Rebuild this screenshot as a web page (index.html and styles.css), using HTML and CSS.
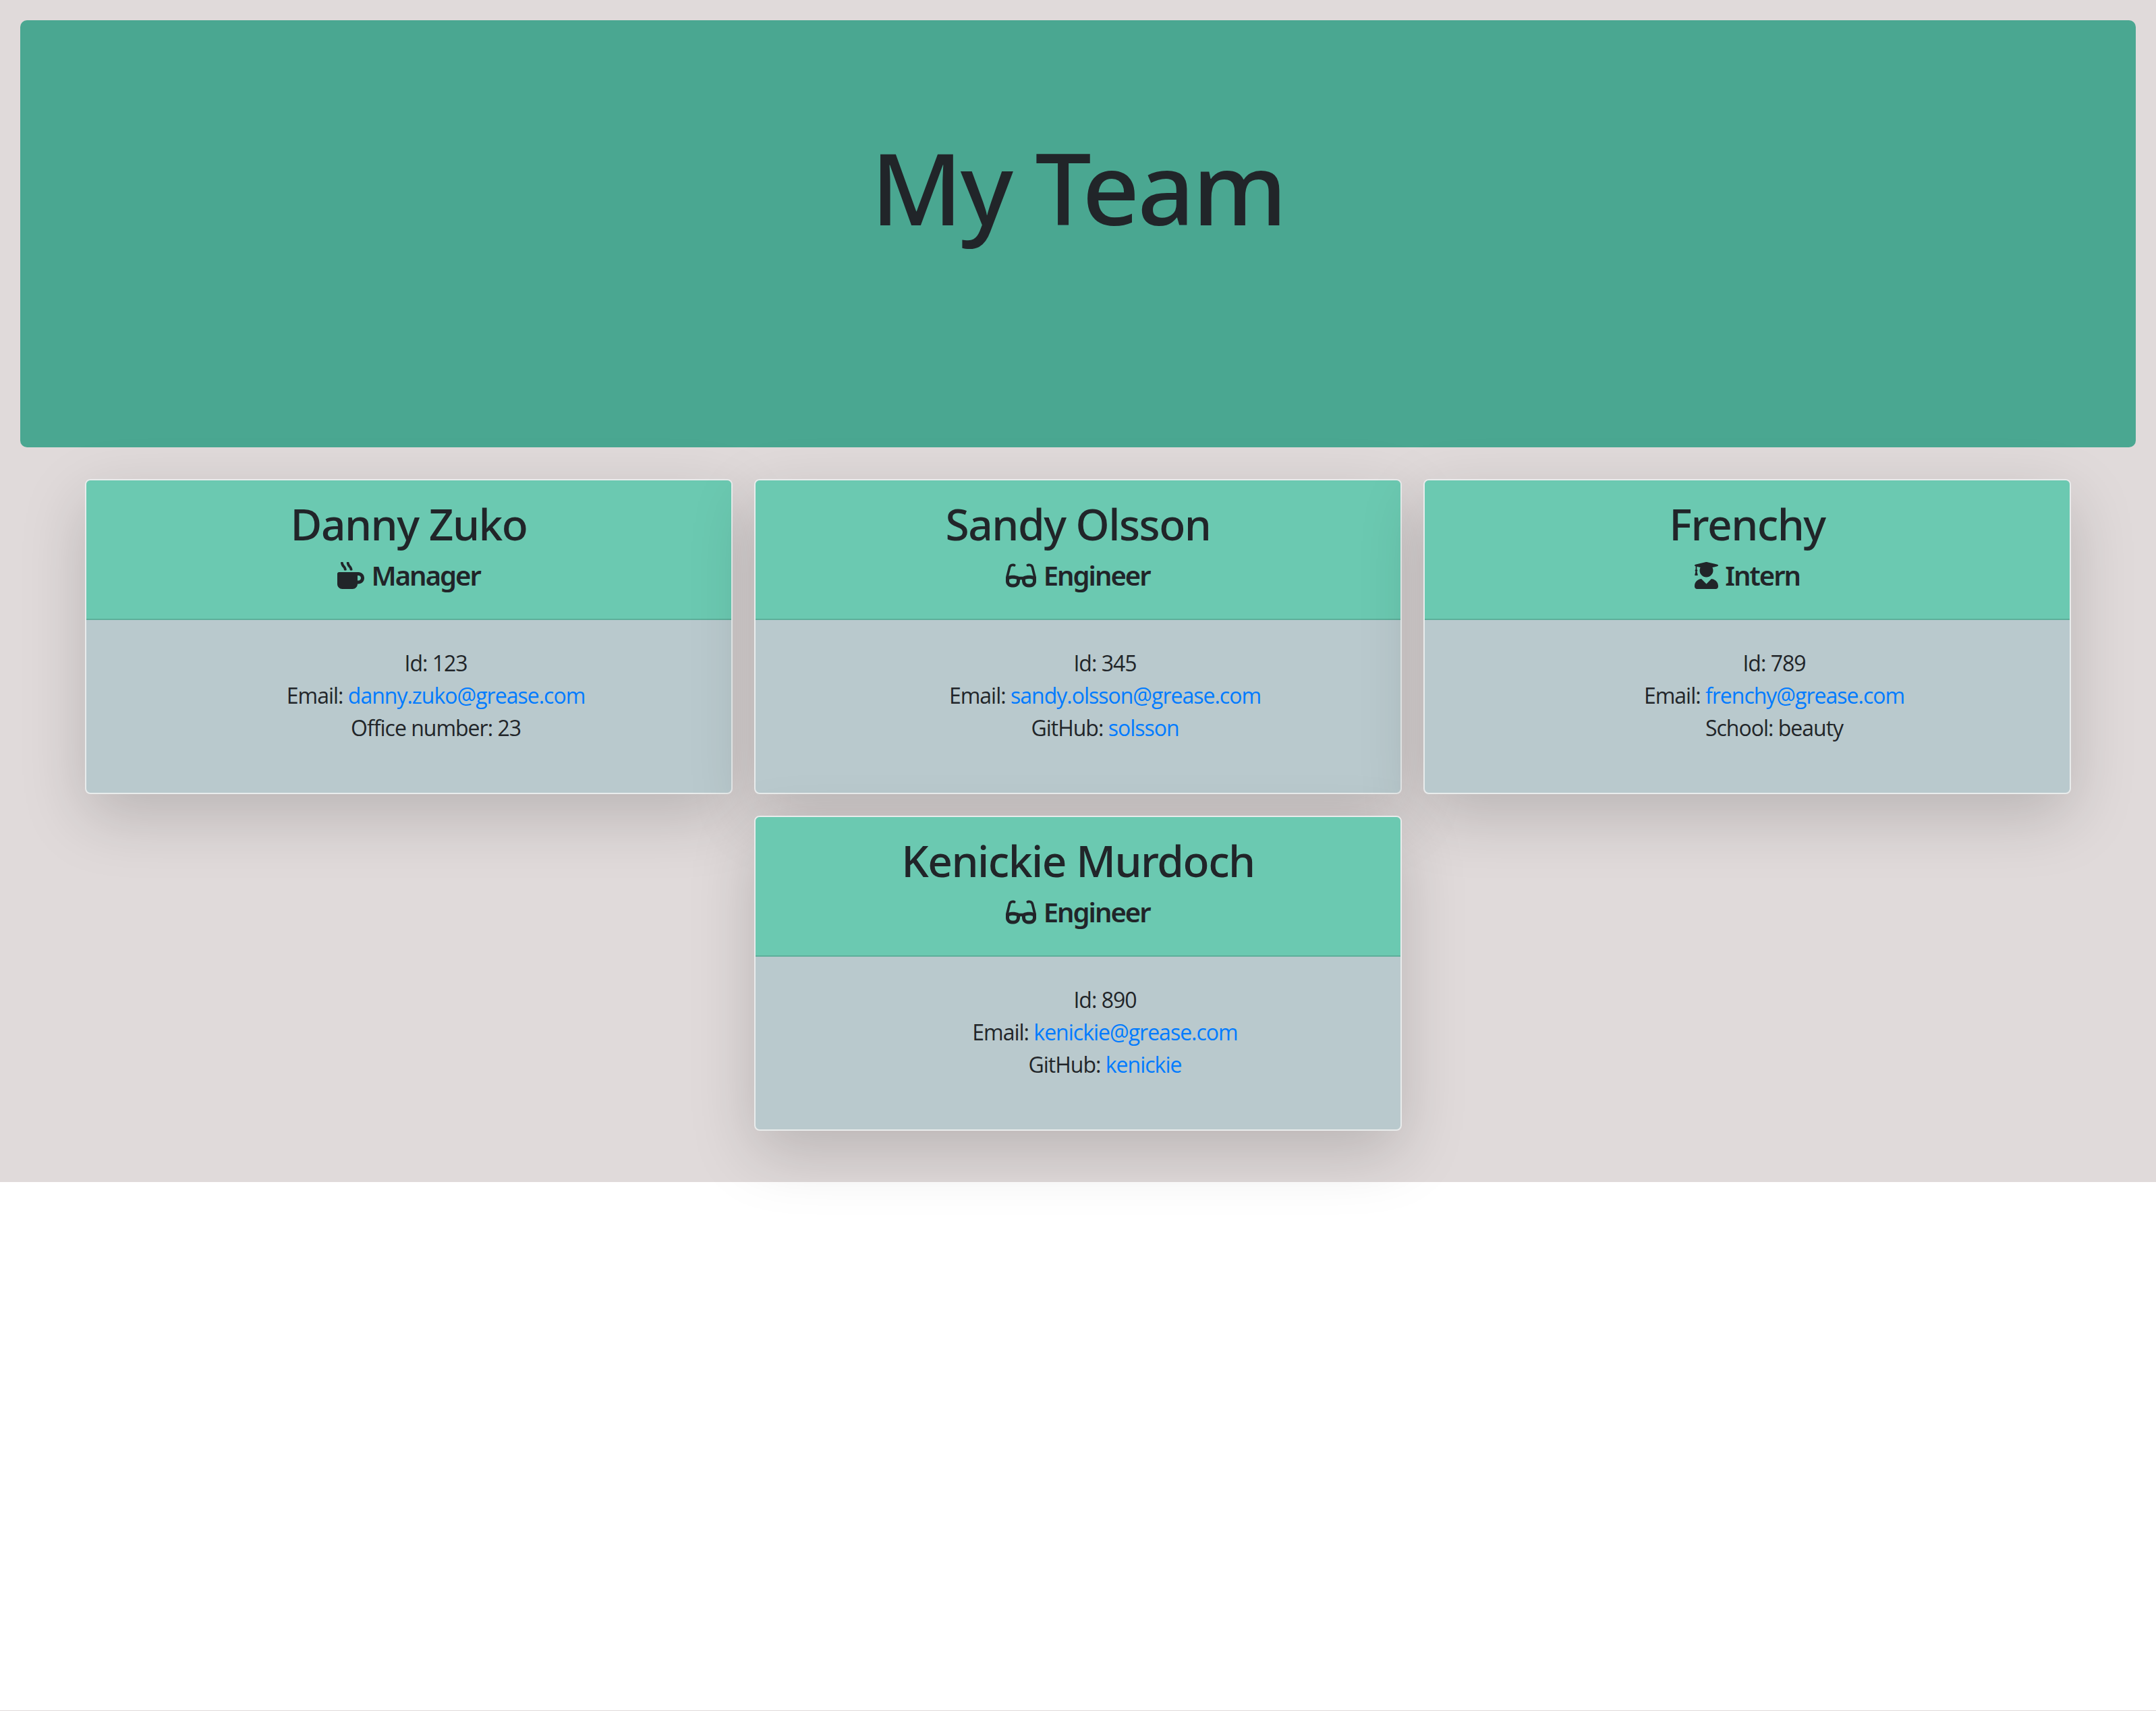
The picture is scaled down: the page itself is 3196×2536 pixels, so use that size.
FILE: index.html
```html
<!DOCTYPE html>
<html lang="en">
<head>
    <meta charset="UTF-8">
    <meta name="viewport" content="width=device-width, initial-scale=1.0">
    <title>My Team</title>
    <link rel="stylesheet" href="styles.css">
</head>
<body>
    <div class="page">
        <header class="jumbotron">
            <h1>My Team</h1>
        </header>

        <main class="team">
            <section class="card">
                <div class="card-header">
                    <h2>Danny Zuko</h2>
                    <h5>
                        <svg class="icon" viewBox="0 0 512 512"><path d="M127.1 146.5c1.3 7.7 8 13.5 16 13.5h16.5c9.8 0 17.6-8.5 16.3-18-3.8-28.2-16.4-54.2-36.6-74.7-14.4-14.7-23.6-33.3-26.4-53.5C111.8 5.9 105 0 96.8 0H80.4C70.6 0 63 8.5 64.1 18c3.9 31.9 18 61.3 40.6 84.4 12 12.2 19.7 27.5 22.4 44.1zm112 0c1.3 7.7 8 13.5 16 13.5h16.5c9.8 0 17.6-8.5 16.3-18-3.8-28.2-16.4-54.2-36.6-74.7-14.4-14.7-23.6-33.3-26.4-53.5C223.8 5.9 217 0 208.8 0h-16.4c-9.8 0-17.5 8.5-16.3 18 3.9 31.9 18 61.3 40.6 84.4 12 12.2 19.7 27.5 22.4 44.1zM400 192H32c-17.7 0-32 14.3-32 32v192c0 53 43 96 96 96h192c53 0 96-43 96-96h16c61.8 0 112-50.2 112-112s-50.2-112-112-112zm0 160h-16v-96h16c26.5 0 48 21.5 48 48s-21.5 48-48 48z"/></svg>
                        Manager
                    </h5>
                </div>
                <div class="card-body">
                    <ul>
                        <li>Id: 123</li>
                        <li>Email: <a href="mailto:danny.zuko@grease.com">danny.zuko@grease.com</a></li>
                        <li>Office number: 23</li>
                    </ul>
                </div>
            </section>

            <section class="card">
                <div class="card-header">
                    <h2>Sandy Olsson</h2>
                    <h5>
                        <svg class="icon" viewBox="0 0 576 512"><path d="M574.1 280.37L528.75 98.66c-5.91-23.7-21.59-44.05-43-55.81-21.44-11.73-46.97-14.11-70.19-6.33l-15.25 5.08c-8.39 2.79-12.92 11.86-10.12 20.24l5.06 15.18c2.79 8.38 11.85 12.91 20.23 10.12l13.18-4.39c10.87-3.62 23-3.57 33.16 1.73 10.29 5.37 17.57 14.56 20.37 25.82l38.46 153.82c-22.19-6.81-49.79-12.46-81.2-12.46-34.77 0-73.98 7.02-114.85 26.74h-73.18c-40.87-19.74-80.08-26.75-114.86-26.75-31.42 0-59.02 5.65-81.21 12.46l38.46-153.82c2.79-11.25 10.09-20.45 20.38-25.81 10.16-5.3 22.28-5.35 33.15-1.73l13.17 4.39c8.38 2.79 17.44-1.74 20.23-10.12l5.06-15.18c2.8-8.38-1.73-17.45-10.12-20.24l-15.25-5.08c-23.22-7.78-48.75-5.41-70.19 6.33-21.41 11.77-37.09 32.11-43 55.8L1.9 280.37A64.218 64.218 0 0 0 0 295.86v70.25C0 429.01 51.58 480 115.2 480h37.12c60.28 0 110.37-45.94 114.88-105.37l2.93-38.63h35.75l2.93 38.63C313.31 434.06 363.4 480 423.68 480h37.12c63.62 0 115.2-50.99 115.2-113.88v-70.25c0-5.23-.64-10.43-1.9-15.5zm-370.72 89.42c-1.97 25.91-24.4 46.21-51.06 46.21H115.2C86.97 416 64 393.62 64 366.11v-37.54c18.12-6.49 43.42-12.92 72.58-12.92 23.86 0 47.26 4.33 69.93 12.92l-3.13 41.22zM512 366.12c0 27.51-22.97 49.88-51.2 49.88h-37.12c-26.67 0-49.1-20.3-51.06-46.21l-3.13-41.22c22.67-8.59 46.08-12.92 69.95-12.92 29.12 0 54.43 6.44 72.55 12.93v37.54z"/></svg>
                        Engineer
                    </h5>
                </div>
                <div class="card-body">
                    <ul>
                        <li>Id: 345</li>
                        <li>Email: <a href="mailto:sandy.olsson@grease.com">sandy.olsson@grease.com</a></li>
                        <li>GitHub: <a href="#">solsson</a></li>
                    </ul>
                </div>
            </section>

            <section class="card">
                <div class="card-header">
                    <h2>Frenchy</h2>
                    <h5>
                        <svg class="icon" viewBox="0 0 448 512"><path d="M319.4 320.6L224 416l-95.4-95.4C57.1 323.7 0 382.2 0 454.4v9.6c0 26.5 21.5 48 48 48h352c26.5 0 48-21.5 48-48v-9.6c0-72.2-57.1-130.7-128.6-133.8zM13.6 79.8l6.4 1.5v58.4c-7 4.2-12 11.5-12 20.3 0 8.4 4.6 15.4 11.1 19.7L3.5 242c-1.7 6.9 2.1 14 7.6 14h41.8c5.5 0 9.3-7.1 7.6-14l-15.6-62.3C51.4 175.4 56 168.4 56 160c0-8.8-5-16.1-12-20.3V87.1l66 15.9c-8.6 17.2-14 36.4-14 57 0 70.7 57.3 128 128 128s128-57.3 128-128c0-20.6-5.3-39.8-14-57l96.3-23.2c18.2-4.4 18.2-27.1 0-31.5l-190.4-46c-13-3.1-26.7-3.1-39.7 0L13.6 48.2c-18.1 4.4-18.1 27.2 0 31.6z"/></svg>
                        Intern
                    </h5>
                </div>
                <div class="card-body">
                    <ul>
                        <li>Id: 789</li>
                        <li>Email: <a href="mailto:frenchy@grease.com">frenchy@grease.com</a></li>
                        <li>School: beauty</li>
                    </ul>
                </div>
            </section>

            <section class="card">
                <div class="card-header">
                    <h2>Kenickie Murdoch</h2>
                    <h5>
                        <svg class="icon" viewBox="0 0 576 512"><path d="M574.1 280.37L528.75 98.66c-5.91-23.7-21.59-44.05-43-55.81-21.44-11.73-46.97-14.11-70.19-6.33l-15.25 5.08c-8.39 2.79-12.92 11.86-10.12 20.24l5.06 15.18c2.79 8.38 11.85 12.91 20.23 10.12l13.18-4.39c10.87-3.62 23-3.57 33.16 1.73 10.29 5.37 17.57 14.56 20.37 25.82l38.46 153.82c-22.19-6.81-49.79-12.46-81.2-12.46-34.77 0-73.98 7.02-114.85 26.74h-73.18c-40.87-19.74-80.08-26.75-114.86-26.75-31.42 0-59.02 5.65-81.21 12.46l38.46-153.82c2.79-11.25 10.09-20.45 20.38-25.81 10.16-5.3 22.28-5.35 33.15-1.73l13.17 4.39c8.38 2.79 17.44-1.74 20.23-10.12l5.06-15.18c2.8-8.38-1.73-17.45-10.12-20.24l-15.25-5.08c-23.22-7.78-48.75-5.41-70.19 6.33-21.41 11.77-37.09 32.11-43 55.8L1.9 280.37A64.218 64.218 0 0 0 0 295.86v70.25C0 429.01 51.58 480 115.2 480h37.12c60.28 0 110.37-45.94 114.88-105.37l2.93-38.63h35.75l2.93 38.63C313.31 434.06 363.4 480 423.68 480h37.12c63.62 0 115.2-50.99 115.2-113.88v-70.25c0-5.23-.64-10.43-1.9-15.5zm-370.72 89.42c-1.97 25.91-24.4 46.21-51.06 46.21H115.2C86.97 416 64 393.62 64 366.11v-37.54c18.12-6.49 43.42-12.92 72.58-12.92 23.86 0 47.26 4.33 69.93 12.92l-3.13 41.22zM512 366.12c0 27.51-22.97 49.88-51.2 49.88h-37.12c-26.67 0-49.1-20.3-51.06-46.21l-3.13-41.22c22.67-8.59 46.08-12.92 69.95-12.92 29.12 0 54.43 6.44 72.55 12.93v37.54z"/></svg>
                        Engineer
                    </h5>
                </div>
                <div class="card-body">
                    <ul>
                        <li>Id: 890</li>
                        <li>Email: <a href="mailto:kenickie@grease.com">kenickie@grease.com</a></li>
                        <li>GitHub: <a href="#">kenickie</a></li>
                    </ul>
                </div>
            </section>
        </main>
    </div>
    <div class="page-end"></div>
</body>
</html>
```

FILE: styles.css
```css
* {
    box-sizing: border-box;
}

body {
    margin: 0;
    min-height: 100vh;
    display: flex;
    flex-direction: column;
    font-family: "Open Sans", "Noto Sans", sans-serif;
    font-size: 32px;
    line-height: 48px;
    letter-spacing: -1px;
    color: #212529;
    text-align: center;
    background: #fff;
}

.page {
    height: 1752px;
    padding-top: 30px;
    background: #e0dada;
}

.page-end {
    height: 1px;
    margin-top: auto;
    background: #e0dada;
}

.jumbotron {
    height: 633px;
    margin: 0 30px 47px;
    padding-top: 151px;
    background: #4aa791;
    border-radius: 10px;
}

h1 {
    margin: 0;
    font-family: "Noto Sans", sans-serif;
    font-size: 148px;
    font-weight: 500;
    line-height: 192px;
    letter-spacing: -3px;
}

.team {
    display: flex;
    flex-wrap: wrap;
    justify-content: center;
    gap: 32px;
    padding: 0 126px;
}

.card {
    width: calc((100% - 64px) / 3);
    background: #b9c9cd;
    border: 2px solid #e9ecec;
    border-radius: 8px;
    box-shadow: 0 32px 96px rgba(0, 0, 0, 0.175);
    overflow: hidden;
}

.card-header {
    padding: 24px 40px;
    background: #6bc9b1;
    border-bottom: 2px solid rgba(0, 0, 0, 0.125);
}

h2 {
    margin: 0 0 14px;
    padding-top: 2px;
    font-family: "Noto Sans", sans-serif;
    font-size: 64px;
    font-weight: 500;
    line-height: 77px;
    letter-spacing: -1.5px;
}

h5 {
    margin: 0 0 16px;
    font-family: "Noto Sans", sans-serif;
    font-size: 40px;
    font-weight: 600;
    line-height: 48px;
    letter-spacing: -2px;
}

.icon {
    height: 40px;
    margin-right: 2px;
    vertical-align: -5px;
    fill: currentColor;
}

.card-body {
    padding: 40px;
}

ul {
    margin: 0 0 32px;
    padding: 0 0 0 80px;
    list-style: none;
}

a {
    color: #007bff;
    text-decoration: none;
}
```
